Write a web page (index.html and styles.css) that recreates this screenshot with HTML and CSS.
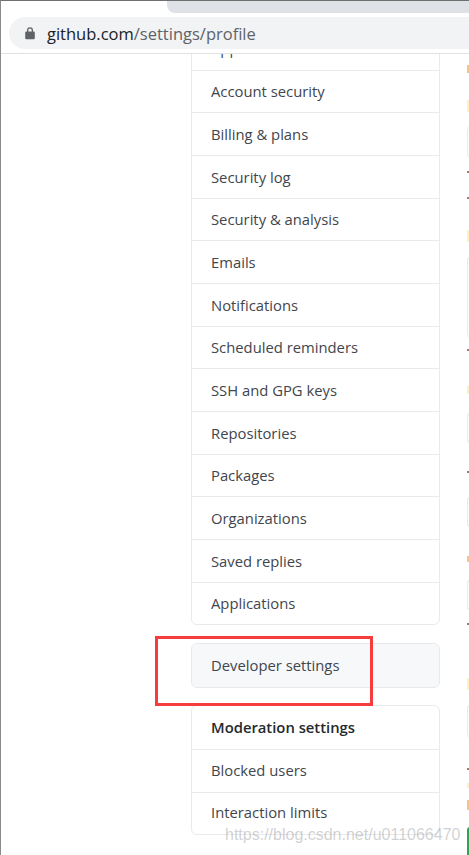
FILE: index.html
```html
<!DOCTYPE html>
<html lang="en">
<head>
  <meta charset="UTF-8">
  <title>github.com/settings/profile</title>
  <link rel="stylesheet" href="styles.css">
</head>
<body>

  <header class="navegador">
    <div class="pestanas"></div>
    <div class="direccion">
      <svg class="candado" viewBox="0 0 12 14" width="12" height="14">
        <path d="M3 6V4.2a3 3 0 0 1 6 0V6h-1.3V4.2a1.7 1.7 0 0 0-3.4 0V6z" fill="#5f6368"/>
        <rect x="1.2" y="5.6" width="9.6" height="7.6" rx="1.2" fill="#5f6368"/>
      </svg>
      <span class="url">github.com<span class="ruta">/settings/profile</span></span>
    </div>
  </header>

  <main class="pagina">
    <nav class="menu">
      <div class="caja caja-principal">
        <a class="fila">Appearance</a>
        <a class="fila">Account security</a>
        <a class="fila">Billing &amp; plans</a>
        <a class="fila">Security log</a>
        <a class="fila">Security &amp; analysis</a>
        <a class="fila">Emails</a>
        <a class="fila">Notifications</a>
        <a class="fila">Scheduled reminders</a>
        <a class="fila">SSH and GPG keys</a>
        <a class="fila">Repositories</a>
        <a class="fila">Packages</a>
        <a class="fila">Organizations</a>
        <a class="fila">Saved replies</a>
        <a class="fila">Applications</a>
      </div>
      <div class="caja caja-dev">
        <a class="fila">Developer settings</a>
      </div>
      <div class="caja caja-mod">
        <a class="fila titulo">Moderation settings</a>
        <a class="fila">Blocked users</a>
        <a class="fila">Interaction limits</a>
      </div>
    </nav>

    <div class="recorte">
      <i></i><i class="naranja"></i>
      <i></i><i class="amarillo"></i>
      <i></i><i class="marco"></i>
      <i></i><i class="oscuro"></i>
      <i></i><i class="oscuro"></i>
      <i></i><i class="amarillo"></i>
      <i></i><i class="marco"></i>
      <i></i><i class="oscuro"></i>
      <i></i><i class="amarillo"></i>
      <i></i><i class="marco"></i>
      <i></i><i class="oscuro"></i>
      <i></i><i class="marco"></i>
      <i></i><i class="naranja"></i>
      <i></i><i class="marco"></i>
      <i></i><i class="oscuro"></i>
      <i></i><i class="amarillo"></i>
      <i></i><i class="marco"></i>
      <i></i><i class="oscuro"></i>
      <i></i><i class="amarillo"></i>
      <i></i><i class="naranja"></i>
      <i></i><i class="verde"></i>
    </div>
  </main>

  <div class="resaltado"></div>
  <div class="marca">https://blog.csdn.net/u011066470</div>

</body>
</html>
```

FILE: styles.css
```css
html, body {
  margin: 0;
  height: 855px;
  overflow: hidden;
}

body {
  font-family: "Open Sans", "Noto Sans", sans-serif;
  background: #fff;
  color: #3f464d;
  border-top: 1px solid #6f6f6f;
  border-left: 1px solid #8a8a8a;
  box-sizing: border-box;
  display: flex;
  flex-direction: column;
}

.navegador {
  flex: none;
  height: 53px;
  box-sizing: border-box;
  border-bottom: 1px solid #dfe1e5;
  background: #fff;
  position: relative;
  z-index: 2;
}

.pestanas {
  height: 12px;
  margin-left: 166px;
  background: #dee1e6;
  border-bottom-left-radius: 8px;
}

.direccion {
  height: 32px;
  margin: 4px 0 0 8px;
  padding-left: 15px;
  display: flex;
  align-items: center;
  gap: 11px;
  background: #f1f3f4;
  border-radius: 16px 0 0 16px;
}

.candado {
  flex: none;
}

.url {
  font-size: 16.5px;
  color: #202124;
}

.ruta {
  color: #5f6368;
}

.pagina {
  flex: 1;
  min-height: 0;
  display: flex;
  gap: 27px;
  padding-left: 190px;
  overflow: hidden;
}

.menu {
  flex: none;
  width: 249px;
  margin-top: -28px;
  display: flex;
  flex-direction: column;
  gap: 18px;
}

.caja {
  border: 1px solid #e8eaed;
  border-radius: 6px;
}

.fila {
  display: flex;
  align-items: center;
  box-sizing: border-box;
  height: 42.67px;
  padding-left: 19px;
  font-size: 14.8px;
  border-top: 1px solid #e8eaed;
}

.fila:first-child {
  border-top: none;
}

.caja-dev {
  background: #f6f8fa;
}

.caja-dev .fila {
  height: 43px;
  padding-bottom: 2px;
}

.caja-mod {
  margin-top: -1px;
}

.caja-mod .fila {
  padding-bottom: 2px;
}

.titulo {
  font-weight: 600;
  color: #24292e;
}

.recorte {
  flex: none;
  width: 3px;
  display: grid;
  grid-template-rows: 11px 8px 27px 12px 15px 30px 14px 2px 24px 2px 31px 12px 15px 80px 12px 2px 35px 8px 19px 30px 28px 2px 24px 30px 29px 6px 18px 30px 13px 2px 53px 12px 15px 32px 31px 2px 13px 5px 12px 10px 17px 28px;
}

.naranja { background: #f3c48d; }
.amarillo { background: #fff0c2; }
.oscuro { background: #a8795c; }
.verde { background: #2ea44f; border-radius: 3px 0 0 0; }

.marco {
  border-left: 1px solid #e8eaed;
  border-top: 1px solid #e8eaed;
  border-bottom: 1px solid #e8eaed;
  border-radius: 4px 0 0 4px;
  box-sizing: border-box;
}

.resaltado {
  position: absolute;
  left: 155px;
  top: 636px;
  width: 218px;
  height: 70px;
  box-sizing: border-box;
  border: 3px solid #f63c3c;
}

.marca {
  position: absolute;
  left: 225px;
  top: 826px;
  font-family: "Liberation Sans", sans-serif;
  font-size: 16px;
  color: rgba(120, 120, 120, 0.35);
}
```
